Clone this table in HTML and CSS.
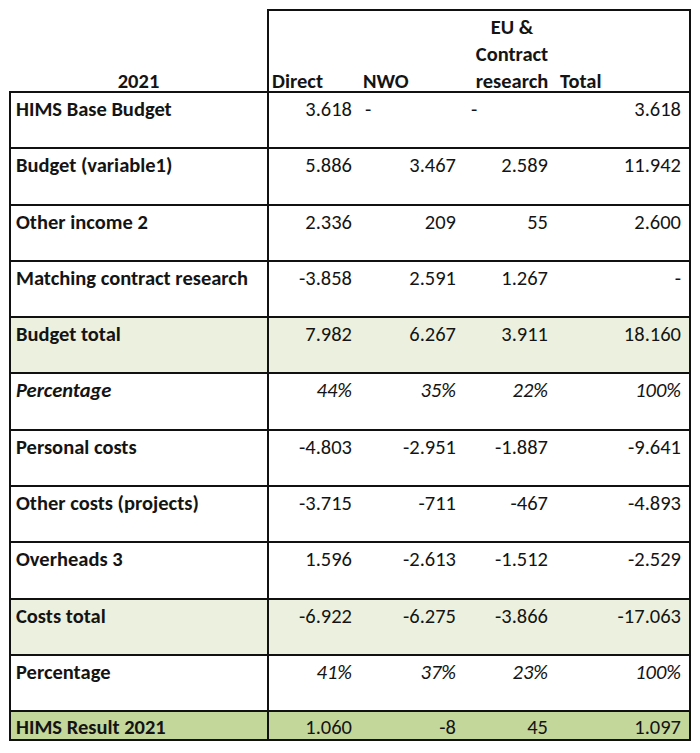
FILE: index.html
```html
<!DOCTYPE html>
<html>
<head>
<meta charset="utf-8">
<link rel="stylesheet" href="styles.css">
</head>
<body>
<table class="budget">
  <colgroup>
    <col class="c-label"><col class="c-direct"><col class="c-nwo"><col class="c-eu"><col class="c-total">
  </colgroup>
  <thead>
    <tr class="head">
      <th class="h-year"><span class="ht">2021</span></th>
      <th class="h-direct"><span class="ht">Direct</span></th>
      <th class="h-nwo"><span class="ht">NWO</span></th>
      <th class="h-eu"><span class="ht">EU &amp;<br>Contract<br>research</span></th>
      <th class="h-total"><span class="ht">Total</span></th>
    </tr>
  </thead>
  <tbody>
    <tr class="row">
      <td class="label">HIMS Base Budget</td>
      <td class="num v-direct">3.618</td>
      <td class="dash v-nwo">-</td>
      <td class="dash v-eu">-</td>
      <td class="num v-total">3.618</td>
    </tr>
    <tr class="row">
      <td class="label">Budget (variable1)</td>
      <td class="num v-direct">5.886</td>
      <td class="num v-nwo">3.467</td>
      <td class="num v-eu">2.589</td>
      <td class="num v-total">11.942</td>
    </tr>
    <tr class="row">
      <td class="label">Other income 2</td>
      <td class="num v-direct">2.336</td>
      <td class="num v-nwo">209</td>
      <td class="num v-eu">55</td>
      <td class="num v-total">2.600</td>
    </tr>
    <tr class="row">
      <td class="label">Matching contract research</td>
      <td class="num v-direct">-3.858</td>
      <td class="num v-nwo">2.591</td>
      <td class="num v-eu">1.267</td>
      <td class="num v-total dash-r">-</td>
    </tr>
    <tr class="row shaded">
      <td class="label">Budget total</td>
      <td class="num v-direct">7.982</td>
      <td class="num v-nwo">6.267</td>
      <td class="num v-eu">3.911</td>
      <td class="num v-total">18.160</td>
    </tr>
    <tr class="row italic">
      <td class="label">Percentage</td>
      <td class="num v-direct">44%</td>
      <td class="num v-nwo">35%</td>
      <td class="num v-eu">22%</td>
      <td class="num v-total">100%</td>
    </tr>
    <tr class="row">
      <td class="label">Personal costs</td>
      <td class="num v-direct">-4.803</td>
      <td class="num v-nwo">-2.951</td>
      <td class="num v-eu">-1.887</td>
      <td class="num v-total">-9.641</td>
    </tr>
    <tr class="row">
      <td class="label">Other costs (projects)</td>
      <td class="num v-direct">-3.715</td>
      <td class="num v-nwo">-711</td>
      <td class="num v-eu">-467</td>
      <td class="num v-total">-4.893</td>
    </tr>
    <tr class="row">
      <td class="label">Overheads 3</td>
      <td class="num v-direct">1.596</td>
      <td class="num v-nwo">-2.613</td>
      <td class="num v-eu">-1.512</td>
      <td class="num v-total">-2.529</td>
    </tr>
    <tr class="row shaded">
      <td class="label">Costs total</td>
      <td class="num v-direct">-6.922</td>
      <td class="num v-nwo">-6.275</td>
      <td class="num v-eu">-3.866</td>
      <td class="num v-total">-17.063</td>
    </tr>
    <tr class="row">
      <td class="label">Percentage</td>
      <td class="num v-direct it">41%</td>
      <td class="num v-nwo it">37%</td>
      <td class="num v-eu it">23%</td>
      <td class="num v-total it">100%</td>
    </tr>
    <tr class="row result">
      <td class="label">HIMS Result 2021</td>
      <td class="num v-direct">1.060</td>
      <td class="num v-nwo">-8</td>
      <td class="num v-eu">45</td>
      <td class="num v-total">1.097</td>
    </tr>
  </tbody>
</table>
</body>
</html>
```
FILE: styles.css
```css
html, body {
  margin: 0;
  padding: 0;
  background: #ffffff;
}
body {
  padding: 9px 0 0 9px;
  font-family: Carlito, Lato, "Liberation Sans", sans-serif;
  color: #141414;
}
.budget {
  border-collapse: collapse;
  table-layout: fixed;
  width: 680px;
  font-size: 20.5px;
}
.c-label { width: 258px; }
.c-direct { width: 90px; }
.c-nwo { width: 107px; }
.c-eu { width: 92px; }
.c-total { width: 133px; }

.budget th, .budget td {
  padding: 0;
  border: 2px solid #111;
}
.head th {
  height: 80px;
  vertical-align: bottom;
  font-weight: 700;
  line-height: 27px;
  padding-bottom: 0;
  border-left: none;
  border-right: none;
}
.head .ht {
  display: block;
  margin-bottom: -4px;
}
.head .h-year {
  text-align: center;
  border-top: none;
  border-left: none;
  border-right: 2px solid #111;
}
.head .h-direct { text-align: left; padding-left: 3px; border-left: 2px solid #111; }
.head .h-nwo { text-align: left; padding-left: 5px; }
.head .h-eu { text-align: center; padding-left: 2px; }
.head .h-total { text-align: left; padding-left: 3px; border-right: 2px solid #111; }

.row td {
  height: 56.3px;
  vertical-align: top;
  line-height: 24px;
  padding-top: 4px;
  box-sizing: border-box;
  border-left: none;
  border-right: none;
}
.row .label {
  font-weight: 700;
  padding-left: 5px;
  border-left: 2px solid #111;
  border-right: 2px solid #111;
  white-space: nowrap;
}
.row .num { text-align: right; }
.row .dash { text-align: left; }
.row .v-direct { padding-right: 6px; }
.row .v-nwo { padding-right: 9px; }
.row .v-eu { padding-right: 9px; }
.row .v-total { padding-right: 8px; border-right: 2px solid #111; }
.row .dash.v-nwo { padding-left: 7px; }
.row .dash.v-eu { padding-left: 6px; }

.shaded td { background: #ebf1de; }
.italic td { font-style: italic; }
.it { font-style: italic; }
.result td {
  height: 29px;
  padding-top: 3px;
  background: #c4d79b;
}
```
